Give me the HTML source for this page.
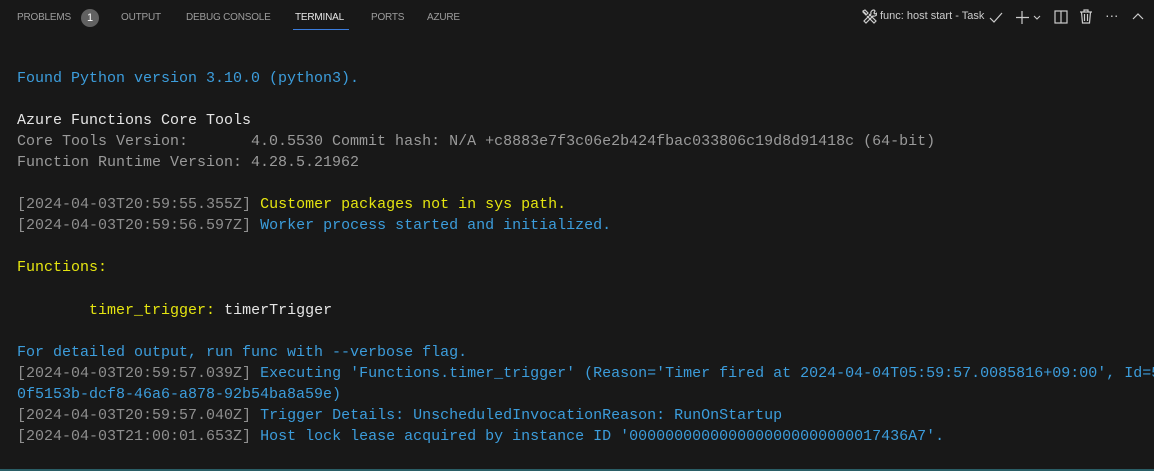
<!DOCTYPE html>
<html><head><meta charset="utf-8"><style>
body{margin:0;width:1154px;height:471px;background:#181818;overflow:hidden;position:relative;font-family:"Liberation Sans",sans-serif}
.tabs{position:absolute;top:0;left:0;right:0;height:36px}
.tab{position:absolute;top:12px;font-size:10px;letter-spacing:-0.2px;color:#9d9d9d}
.tab.act{color:#e7e7e7}
.ul{position:absolute;left:293px;top:29px;width:56px;height:1px;background:#3b7ddd}
.badge{position:absolute;left:81px;top:9px;width:18px;height:18px;border-radius:9px;background:#616161;color:#fff;font-size:11px;text-align:center;line-height:18px}
pre{position:absolute;left:17px;top:67.5px;margin:0;font-family:"Liberation Mono",monospace;font-size:15px;line-height:21.1px;color:#cccccc;white-space:pre}
.b{color:#3c9ddc}.y{color:#e5e510}.g{color:#9a9a9a}.d{color:#8f8f8f}.w{color:#e5e5e5}
.bot{position:absolute;left:0;bottom:0;width:1154px;height:2px;background:#2a5e66}
.ic{position:absolute;top:8px}
</style></head><body>
<div class="tabs">
<span class="tab" style="left:17px">PROBLEMS</span><span class="badge">1</span>
<span class="tab" style="left:121px">OUTPUT</span>
<span class="tab" style="left:186px">DEBUG CONSOLE</span>
<span class="tab act" style="left:295px">TERMINAL</span>
<span class="tab" style="left:371px">PORTS</span>
<span class="tab" style="left:427px">AZURE</span>
<div class="ul"></div>
<svg class="ic" style="left:861px" width="16" height="18" viewBox="0 0 16 18" fill="none" stroke="#ccc" stroke-width="1.2"><path d="M2 3l3 3M2 3l2-1 3 3-2 2-3-3zM6 8l7 7 2-2-7-7"/><path d="M13 2a3 3 0 0 0-3 4L3 13l2 2 7-7a3 3 0 0 0 4-3l-2 1-1-1 1-2z"/></svg>
<span class="tab act" style="left:880px;font-size:11px;letter-spacing:0;top:10px;color:#cccccc">func: host start - Task</span>
<svg class="ic" style="left:988px" width="16" height="18" viewBox="0 0 16 18" fill="none" stroke="#ccc" stroke-width="1.2"><path d="M2 10l4 4 8-9"/></svg>
<svg class="ic" style="left:1014px" width="16" height="18" viewBox="0 0 16 18" fill="none" stroke="#ccc" stroke-width="1.2"><path d="M8 3v13M2 9.5h13"/></svg>
<svg class="ic" style="left:1032px" width="10" height="18" viewBox="0 0 10 18" fill="none" stroke="#ccc" stroke-width="1.1"><path d="M2 8l3 3 3-3"/></svg>
<svg class="ic" style="left:1053px" width="16" height="18" viewBox="0 0 16 18" fill="none" stroke="#ccc" stroke-width="1.2"><rect x="2" y="3" width="12" height="12"/><path d="M8 3v12"/></svg>
<svg class="ic" style="left:1078px" width="16" height="18" viewBox="0 0 16 18" fill="none" stroke="#ccc" stroke-width="1.2"><path d="M2 4h12M6 4V2h4v2M3.5 4l1 11h7l1-11M6.5 6v7M9.5 6v7"/></svg>
<span class="tab act" style="left:1105px;top:7px;font-size:14px;color:#ccc">···</span>
<svg class="ic" style="left:1131px" width="14" height="18" viewBox="0 0 14 18" fill="none" stroke="#ccc" stroke-width="1.2"><path d="M2 11l5-5 5 5"/></svg>
</div>
<pre><span class="b">Found Python version 3.10.0 (python3).</span>

<span class="w">Azure Functions Core Tools</span>
<span class="g">Core Tools Version:       4.0.5530 Commit hash: N/A +c8883e7f3c06e2b424fbac033806c19d8d91418c (64-bit)</span>
<span class="g">Function Runtime Version: 4.28.5.21962</span>

<span class="d">[2024-04-03T20:59:55.355Z]</span> <span class="y">Customer packages not in sys path.</span>
<span class="d">[2024-04-03T20:59:56.597Z]</span> <span class="b">Worker process started and initialized.</span>

<span class="y">Functions:</span>

        <span class="y">timer_trigger:</span> <span class="w">timerTrigger</span>

<span class="b">For detailed output, run func with --verbose flag.</span>
<span class="d">[2024-04-03T20:59:57.039Z]</span> <span class="b">Executing 'Functions.timer_trigger' (Reason='Timer fired at 2024-04-04T05:59:57.0085816+09:00', Id=5</span>
<span class="b">0f5153b-dcf8-46a6-a878-92b54ba8a59e)</span>
<span class="d">[2024-04-03T20:59:57.040Z]</span> <span class="b">Trigger Details: UnscheduledInvocationReason: RunOnStartup</span>
<span class="d">[2024-04-03T21:00:01.653Z]</span> <span class="b">Host lock lease acquired by instance ID '0000000000000000000000000017436A7'.</span></pre>
<div class="bot"></div>
</body></html>
